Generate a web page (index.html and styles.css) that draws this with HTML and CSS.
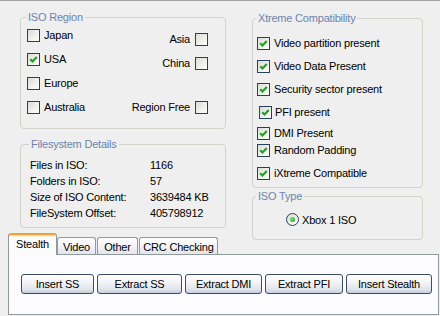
FILE: index.html
```html
<!DOCTYPE html>
<html lang="en">
<head>
    <meta charset="UTF-8">
    <meta name="viewport" content="width=device-width, initial-scale=1.0">
    <title>ISO Details</title>
    <link rel="stylesheet" href="styles.css">
</head>
<body>
    <div class="window">
        <div class="col-left">
            <fieldset class="group region">
                <legend>ISO Region</legend>
                <div class="region-grid">
                    <label class="check"><span class="box"></span>Japan</label>
                    <label class="check right shift"><span>Asia</span><span class="box"></span></label>
                    <label class="check"><span class="box"><svg viewBox="0 0 11 11"><path d="M2.2 5.2 L4.5 7.5 L8.8 3.1"/></svg></span>USA</label>
                    <label class="check right shift"><span>China</span><span class="box"></span></label>
                    <label class="check wide"><span class="box"></span>Europe</label>
                    <label class="check"><span class="box"></span>Australia</label>
                    <label class="check right"><span>Region Free</span><span class="box"></span></label>
                </div>
            </fieldset>

            <fieldset class="group files">
                <legend>Filesystem Details</legend>
                <div class="details">
                    <span>Files in ISO:</span><span>1166</span>
                    <span>Folders in ISO:</span><span>57</span>
                    <span>Size of ISO Content:</span><span>3639484 KB</span>
                    <span>FileSystem Offset:</span><span>405798912</span>
                </div>
            </fieldset>
        </div>

        <div class="col-right">
            <fieldset class="group xtreme">
                <legend>Xtreme Compatibility</legend>
                <label class="check row"><span class="box"><svg viewBox="0 0 11 11"><path d="M2.2 5.2 L4.5 7.5 L8.8 3.1"/></svg></span>Video partition present</label>
                <label class="check row"><span class="box"><svg viewBox="0 0 11 11"><path d="M2.2 5.2 L4.5 7.5 L8.8 3.1"/></svg></span>Video Data Present</label>
                <label class="check row"><span class="box"><svg viewBox="0 0 11 11"><path d="M2.2 5.2 L4.5 7.5 L8.8 3.1"/></svg></span>Security sector present</label>
                <label class="check row pfi"><span class="box"><svg viewBox="0 0 11 11"><path d="M2.2 5.2 L4.5 7.5 L8.8 3.1"/></svg></span>PFI present</label>
                <label class="check row near"><span class="box"><svg viewBox="0 0 11 11"><path d="M2.2 5.2 L4.5 7.5 L8.8 3.1"/></svg></span>DMI Present</label>
                <label class="check row nearer"><span class="box"><svg viewBox="0 0 11 11"><path d="M2.2 5.2 L4.5 7.5 L8.8 3.1"/></svg></span>Random Padding</label>
                <label class="check row"><span class="box"><svg viewBox="0 0 11 11"><path d="M2.2 5.2 L4.5 7.5 L8.8 3.1"/></svg></span>iXtreme Compatible</label>
            </fieldset>

            <fieldset class="group isotype">
                <legend>ISO Type</legend>
                <label class="option"><span class="radio"></span>Xbox 1 ISO</label>
            </fieldset>
        </div>

        <div class="tabs">
            <div class="tab active tab-stealth">Stealth</div>
            <div class="tab tab-video">Video</div>
            <div class="tab tab-other">Other</div>
            <div class="tab tab-crc">CRC Checking</div>
        </div>

        <div class="panel">
            <button class="btn btn-insert">Insert SS</button>
            <button class="btn btn-extract">Extract SS</button>
            <button class="btn btn-dmi">Extract DMI</button>
            <button class="btn btn-pfi">Extract PFI</button>
            <button class="btn btn-stealth">Insert Stealth</button>
        </div>
    </div>
</body>
</html>
```

FILE: styles.css
```css
body {
    margin: 0;
    height: 315px;
    overflow: hidden;
    background-color: #efefef;
    border-top: 1px solid #a3a3a3;
    font-family: "Liberation Sans", Arial, sans-serif;
    font-size: 11px;
    letter-spacing: -0.2px;
    color: #000;
}

.window {
    display: grid;
    grid-template-columns: 218px 213px;
    padding-left: 8px;
}

.col-left {
    grid-column: 1;
    grid-row: 1;
    padding: 10px 0 0 12px;
}

.col-right {
    grid-column: 2;
    grid-row: 1 / 3;
    padding: 11px 0 0 26px;
}

/* group boxes */
.group {
    margin: 0;
    min-width: 0;
    box-sizing: border-box;
    border: 1px solid #d3d3cc;
    border-radius: 4px;
}

.group legend {
    padding: 0 2px;
    margin-left: -1px;
    line-height: 13px;
    color: #6c84ad;
}

.region {
    width: 206px;
    padding: 5px 17px 14px 6px;
}

.files {
    width: 206px;
    margin-top: 9px;
    padding: 6px 4px 6px 9px;
}

.xtreme {
    width: 171px;
    padding: 12px 4px 7px 4px;
}

.isotype {
    width: 171px;
    margin-top: 2px;
    padding: 10px 4px 13px 4px;
}

/* checkboxes */
.check {
    display: flex;
    align-items: center;
    gap: 4px;
    height: 13px;
    line-height: 13px;
    white-space: nowrap;
}

.check.right {
    justify-self: end;
    gap: 5px;
}

.box {
    width: 13px;
    height: 13px;
    box-sizing: border-box;
    flex: none;
    border: 1px solid #27425a;
    background: linear-gradient(135deg, #dcdcd6, #f4f4f2 70%, #ffffff);
}

.box svg {
    display: block;
    width: 11px;
    height: 11px;
    fill: none;
    stroke: #22a022;
    stroke-width: 2.2;
}

.region-grid {
    display: grid;
    grid-template-columns: 1fr auto;
    grid-template-rows: repeat(4, 13px);
    row-gap: 11px;
}

.region-grid .wide {
    grid-column: 1 / -1;
}

.region-grid .shift {
    align-self: start;
    margin-top: 4px;
}

.xtreme .row + .row {
    margin-top: 10px;
}

.xtreme .row.near {
    margin-top: 8px;
}

.xtreme .row.nearer {
    margin-top: 4px;
}

.pfi .box {
    margin-left: 2px;
    margin-right: -1px;
}

.details {
    display: grid;
    grid-template-columns: 120px 1fr;
    grid-auto-rows: 16px;
    line-height: 16px;
}

/* radio */
.option {
    display: flex;
    align-items: center;
    gap: 3px;
    height: 13px;
    margin-left: 29px;
}

.radio {
    width: 13px;
    height: 13px;
    box-sizing: border-box;
    border: 1px solid #27425a;
    border-radius: 50%;
    background: linear-gradient(135deg, #dcdcd6, #ffffff);
    display: flex;
    align-items: center;
    justify-content: center;
}

.radio::after {
    content: "";
    width: 5px;
    height: 5px;
    border-radius: 50%;
    background: radial-gradient(circle at 35% 35%, #7ee07e, #1f9a1f);
}

/* tabs */
.tabs {
    grid-column: 1;
    grid-row: 2;
    display: flex;
    align-items: flex-end;
    margin-top: 5px;
    margin-bottom: -1px;
}

.tab {
    height: 17px;
    box-sizing: border-box;
    margin: 0 1px 1px 0;
    padding-top: 3px;
    line-height: 13px;
    text-align: center;
    border: 1px solid #919b9c;
    border-bottom: none;
    border-radius: 3px 3px 0 0;
    background: linear-gradient(#ffffff, #f2f2f5 55%, #e1e5ec);
    white-space: nowrap;
}

.tab.active {
    position: relative;
    z-index: 1;
    height: 22px;
    margin: 0;
    border-top: 2px solid #eea238;
    background: linear-gradient(#ffd672, #fcfcfe 2px);
}

.tab-stealth { width: 49px; }
.tab-video { width: 39px; }
.tab-other { width: 41px; }
.tab-crc { width: 79px; }

.panel {
    grid-column: 1 / -1;
    grid-row: 3;
    height: 61px;
    box-sizing: border-box;
    display: flex;
    align-items: flex-start;
    gap: 3px;
    padding: 19px 0 0 12px;
    border: 1px solid #919b9c;
    background-color: #fcfcfe;
}

/* buttons */
.btn {
    height: 20px;
    padding: 0;
    font-family: inherit;
    font-size: 11px;
    letter-spacing: -0.2px;
    color: #000;
    border: 1px solid #3d4c66;
    border-radius: 3px;
    background: linear-gradient(#ffffff, #f1f2f5 45%, #dfe4ec 80%, #c6cfdc);
}

.btn-insert { width: 73px; }
.btn-extract { width: 85px; }
.btn-dmi { width: 77px; }
.btn-pfi { width: 78px; }
.btn-stealth { width: 86px; }
```
